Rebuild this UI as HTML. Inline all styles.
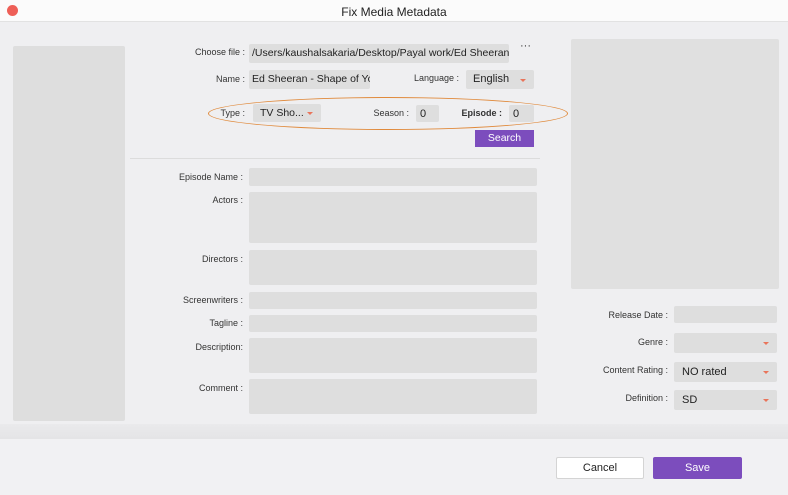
<!DOCTYPE html>
<html><head><style>
*{margin:0;padding:0;box-sizing:border-box}
body{width:788px;height:495px;overflow:hidden;background:#efeff1;font-family:"Liberation Sans",sans-serif;position:relative}
.a{position:absolute}
.f{position:absolute;background:#dedede;border-radius:2px}
.l{position:absolute;font-size:9px;color:#333;text-align:right;width:120px}
.t{font-size:11px;color:#222;padding-left:4px;white-space:nowrap;overflow:hidden}
.dd::after{content:"";position:absolute;right:8px;top:50%;margin-top:-1px;border-left:3px solid transparent;border-right:3px solid transparent;border-top:3px solid #e9745a}
</style></head><body>
<div class="a" style="left:0;top:0;width:788px;height:22px;background:#fbfbfb;border-bottom:1px solid #e2e2e2"></div>
<div class="a" style="left:7px;top:5px;width:11px;height:11px;border-radius:50%;background:#ee5f57"></div>
<div class="a" style="left:0;top:5px;width:788px;text-align:center;font-size:12px;color:#222">Fix Media Metadata</div>
<div class="a" style="left:0;top:424px;width:788px;height:15px;background:linear-gradient(#eaeaec,#e4e4e6)"></div>
<div class="a" style="left:0;top:439px;width:788px;height:56px;background:#f1f1f3"></div>

<div class="f" style="left:13px;top:46px;width:112px;height:375px"></div>
<div class="f" style="left:571px;top:39px;width:208px;height:250px;background:#e0e0e0"></div>

<div class="l" style="left:125px;top:47px">Choose file :</div>
<div class="f t" style="left:249px;top:44px;width:260px;height:19px;line-height:19px;padding-left:3px;font-size:10.5px">/Users/kaushalsakaria/Desktop/Payal work/Ed Sheeran</div>
<div class="a" style="left:520px;top:40px;font-size:11px;color:#333">···</div>
<div class="l" style="left:125px;top:74px">Name :</div>
<div class="f t" style="left:249px;top:70px;width:121px;height:19px;line-height:19px;padding-left:3px;font-size:10.5px">Ed Sheeran - Shape of You [Of</div>
<div class="l" style="left:339px;top:73px">Language :</div>
<div class="f t dd" style="left:466px;top:70px;width:68px;height:19px;line-height:19px;padding-left:7px">English</div>

<div class="a" style="left:208px;top:97px;width:360px;height:33px;border:1.5px solid #e08a3c;border-radius:50%"></div>
<div class="l" style="left:125px;top:108px">Type :</div>
<div class="f t dd" style="left:253px;top:104px;width:68px;height:18px;line-height:18px;padding-left:7px;font-size:10.5px">TV Sho...</div>
<div class="l" style="left:289px;top:108px">Season :</div>
<div class="f t" style="left:416px;top:105px;width:23px;height:17px;line-height:19px">0</div>
<div class="l" style="left:382px;top:108px;font-weight:bold">Episode :</div>
<div class="f t" style="left:509px;top:105px;width:25px;height:17px;line-height:19px">0</div>
<div class="a" style="left:475px;top:130px;width:59px;height:17px;background:#7c4dbd;color:#fff;font-size:10.5px;text-align:center;line-height:17px">Search</div>
<div class="a" style="left:130px;top:158px;width:410px;height:1px;background:#dcdcdc"></div>

<div class="l" style="left:123px;top:172px">Episode Name :</div>
<div class="f" style="left:249px;top:168px;width:288px;height:18px"></div>
<div class="l" style="left:123px;top:195px">Actors :</div>
<div class="f" style="left:249px;top:192px;width:288px;height:51px"></div>
<div class="l" style="left:123px;top:254px">Directors :</div>
<div class="f" style="left:249px;top:250px;width:288px;height:35px"></div>
<div class="l" style="left:123px;top:295px">Screenwriters :</div>
<div class="f" style="left:249px;top:292px;width:288px;height:17px"></div>
<div class="l" style="left:123px;top:318px">Tagline :</div>
<div class="f" style="left:249px;top:315px;width:288px;height:17px"></div>
<div class="l" style="left:123px;top:342px">Description:</div>
<div class="f" style="left:249px;top:338px;width:288px;height:35px"></div>
<div class="l" style="left:123px;top:383px">Comment :</div>
<div class="f" style="left:249px;top:379px;width:288px;height:35px"></div>

<div class="l" style="left:548px;top:310px">Release Date :</div>
<div class="f" style="left:674px;top:306px;width:103px;height:17px"></div>
<div class="l" style="left:548px;top:337px">Genre :</div>
<div class="f dd" style="left:674px;top:333px;width:103px;height:20px"></div>
<div class="l" style="left:548px;top:365px">Content Rating :</div>
<div class="f t dd" style="left:674px;top:362px;width:103px;height:20px;line-height:20px;padding-left:8px">NO rated</div>
<div class="l" style="left:548px;top:393px">Definition :</div>
<div class="f t dd" style="left:674px;top:390px;width:103px;height:20px;line-height:20px;padding-left:8px">SD</div>

<div class="a" style="left:556px;top:457px;width:88px;height:22px;background:#fff;border:1px solid #d4d4d4;border-radius:2px;font-size:11px;color:#222;text-align:center;line-height:20px">Cancel</div>
<div class="a" style="left:653px;top:457px;width:89px;height:22px;background:#7c4dbd;border-radius:2px;font-size:11px;color:#fff;text-align:center;line-height:22px">Save</div>
</body></html>
